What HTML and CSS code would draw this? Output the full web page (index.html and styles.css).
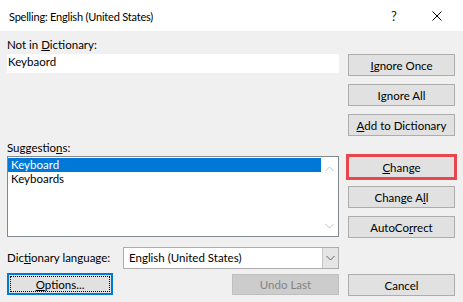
FILE: index.html
```html
<!DOCTYPE html>
<html lang="en">
<head>
  <meta charset="UTF-8">
  <meta name="viewport" content="width=device-width, initial-scale=1.0">
  <title>Spelling</title>
  <link rel="stylesheet" href="styles.css">
</head>
<body>
  <div class="dialog">
    <header class="titlebar">
      <div class="title">Spelling: English (United States)</div>
      <div class="help">?</div>
      <div class="close">
        <svg width="10" height="10" viewBox="0 0 10 10">
          <path d="M0.5 0.5 L9.5 9.5 M9.5 0.5 L0.5 9.5" stroke="#000" stroke-width="1" fill="none"/>
        </svg>
      </div>
    </header>
    <main class="content">
      <!-- not in dictionary -->
      <div class="col">
        <div class="label">Not in <u>D</u>ictionary:</div>
        <div class="word">Keybaord</div>
      </div>
      <div class="col buttons top-buttons">
        <div class="btn"><u>I</u>gnore Once</div>
        <div class="btn">I<u>g</u>nore All</div>
        <div class="btn"><u>A</u>dd to Dictionary</div>
      </div>

      <!-- suggestions -->
      <div class="col">
        <div class="label">Suggestio<u>n</u>s:</div>
        <div class="list">
          <div class="items">
            <div class="item selected">Keyboard</div>
            <div class="item">Keyboards</div>
          </div>
          <div class="scrollbar">
            <svg width="9" height="6" viewBox="0 0 9 6"><path d="M0.5 5 L4.5 1 L8.5 5" stroke="#c2c2c2" fill="none"/></svg>
            <svg width="9" height="6" viewBox="0 0 9 6"><path d="M0.5 1 L4.5 5 L8.5 1" stroke="#c2c2c2" fill="none"/></svg>
          </div>
        </div>
      </div>
      <div class="col buttons mid-buttons">
        <div class="btn marked"><u>C</u>hange</div>
        <div class="btn">Change A<u>l</u>l</div>
        <div class="btn">AutoCo<u>r</u>rect</div>
      </div>

      <!-- language -->
      <div class="lang-row">
        <div class="label">Dic<u>t</u>ionary language:</div>
        <div class="combo">
          <div class="combo-text">English (United States)</div>
          <div class="combo-btn">
            <svg width="9" height="6" viewBox="0 0 9 6"><path d="M0.5 1 L4.5 5 L8.5 1" stroke="#606060" fill="none"/></svg>
          </div>
        </div>
      </div>
      <div></div>

      <!-- bottom buttons -->
      <div class="bottom-row">
        <div class="btn focused"><span><u>O</u>ptions...</span></div>
        <div class="btn disabled">Undo Last</div>
      </div>
      <div class="bottom-right">
        <div class="btn">Cancel</div>
      </div>
    </main>
  </div>
</body>
</html>
```

FILE: styles.css
```css
* {
  margin: 0;
  padding: 0;
  box-sizing: border-box;
}
body {
  width: 463px;
  height: 302px;
  overflow: hidden;
  font-family: Lato, 'Open Sans', sans-serif;
  font-size: 11.5px;
  color: #000;
  background: #f0f0f0;
}
u {
  text-decoration: underline;
  text-underline-offset: 1px;
}
.dialog {
  height: 302px;
  display: flex;
  flex-direction: column;
}
.titlebar {
  display: flex;
  align-items: center;
  height: 31px;
  background: #fff;
  padding: 0 0 0 9px;
}
.title {
  margin-right: auto;
  padding-top: 1px;
  font-size: 11px;
  letter-spacing: -0.2px;
}
.help {
  width: 46px;
  text-align: center;
  font-size: 13px;
  color: #222;
}
.close {
  width: 46px;
  height: 31px;
  display: flex;
  align-items: center;
  justify-content: center;
  padding-right: 7px;
}
.content {
  display: grid;
  grid-template-columns: 332px 107px;
  grid-template-rows: 109px 102px 29px 31px;
  column-gap: 9px;
  padding-left: 7px;
}
.label {
  line-height: 16px;
}
.col > .label:first-child {
  margin-top: 6px;
}
.col:nth-child(3) > .label:first-child {
  margin-top: 0;
}
.word {
  margin-top: 1px;
  height: 19px;
  background: #fff;
  padding: 0 1px;
  line-height: 16px;
}
.buttons {
  display: flex;
  flex-direction: column;
  gap: 8px;
}
.top-buttons {
  padding-top: 23px;
}
.mid-buttons {
  padding-top: 16px;
}
.btn {
  height: 22px;
  display: flex;
  align-items: center;
  justify-content: center;
  background: #e1e1e1;
  border: 1px solid #adadad;
  white-space: nowrap;
}
.btn.marked {
  border-color: #e8474f;
  outline: 2px solid #e8474f;
}
.btn.disabled {
  background: #cccccc;
  border-color: #bfbfbf;
  color: #838383;
}
.btn.focused {
  border: 2px solid #0078d7;
  padding: 1px;
  align-items: stretch;
}
.btn.focused > span {
  flex: 1;
  display: flex;
  align-items: center;
  justify-content: center;
  border: 1px dotted #000;
}
.list {
  display: flex;
  height: 81px;
  background: #fff;
  border: 1px solid #828790;
}
.items {
  flex: 1;
  padding-top: 1px;
}
.item {
  height: 14px;
  line-height: 14px;
  padding-left: 3px;
}
.item.selected {
  background: #0078d7;
  color: #fff;
}
.scrollbar {
  width: 17px;
  display: flex;
  flex-direction: column;
  justify-content: space-between;
  align-items: center;
  padding: 9px 0 7px;
}
.scrollbar svg {
  display: block;
}
.lang-row {
  display: flex;
  align-items: center;
  padding-top: 5px;
  height: 27px;
}
.combo {
  margin-left: auto;
  width: 216px;
  height: 22px;
  display: flex;
  background: #fff;
  border: 1px solid #adadad;
}
.combo-text {
  flex: 1;
  padding-left: 5px;
  line-height: 20px;
}
.combo-btn {
  width: 16px;
  display: flex;
  align-items: center;
  justify-content: center;
  background: #e5e5e5;
  border-left: 1px solid #c5c5c5;
}
.bottom-row {
  display: flex;
  justify-content: space-between;
  align-items: flex-start;
  padding-top: 2px;
}
.bottom-row .btn.focused {
  width: 106px;
}
.bottom-row .btn.disabled {
  width: 107px;
  height: 21px;
  margin-top: 1px;
}
.bottom-right {
  padding-top: 3px;
}
```
